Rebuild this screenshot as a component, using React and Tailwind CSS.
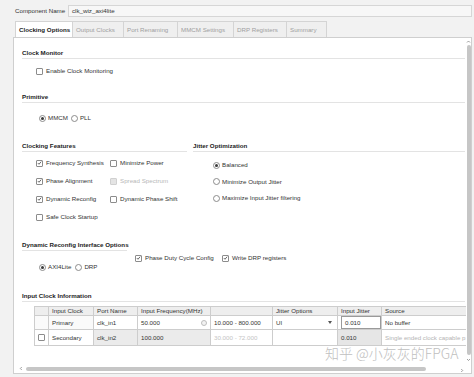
import React from "react";

// small Vivado-like widgets, sized for a 6.2px UI font
function Check({ on, disabled }) {
  return (
    <span
      className={
        "w-[7px] h-[7px] shrink-0 border rounded-[1px] flex items-center justify-center " +
        (disabled ? "border-[#d0d0d0] bg-[#e4e4e4]" : "border-[#8c8c8c] bg-white")
      }
    >
      {on && (
        <svg width="6" height="6" viewBox="0 0 6 6">
          <path d="M1 3.1 L2.4 4.5 L5 1.4" fill="none" stroke="#333" strokeWidth="0.9" />
        </svg>
      )}
    </span>
  );
}

function Radio({ on }) {
  return (
    <span className="w-[7px] h-[7px] shrink-0 rounded-full border border-[#8c8c8c] bg-white flex items-center justify-center">
      {on && <span className="w-[3px] h-[3px] rounded-full bg-[#3a3a3a]" />}
    </span>
  );
}

function CheckItem({ label, on, disabled }) {
  return (
    <div className="h-[10px] flex items-center gap-[3px] whitespace-nowrap">
      <Check on={on} disabled={disabled} />
      <span className={disabled ? "text-[#b8b8b8]" : ""}>{label}</span>
    </div>
  );
}

function RadioItem({ label, on }) {
  return (
    <div className="h-[10px] flex items-center gap-[2px] whitespace-nowrap">
      <Radio on={on} />
      <span>{label}</span>
    </div>
  );
}

function Heading({ children, className = "" }) {
  return (
    <div className={"h-[11px] leading-[10px] border-b border-[#e3e3e3] font-bold text-[#222] whitespace-nowrap " + className}>
      {children}
    </div>
  );
}

const tabs = [
  ["Clocking Options", "w-[58px]"],
  ["Output Clocks", "w-[51px]"],
  ["Port Renaming", "w-[54px]"],
  ["MMCM Settings", "w-[56px]"],
  ["DRP Registers", "w-[53px]"],
  ["Summary", "w-[40px]"],
];

function Cell({ children, className = "" }) {
  return (
    <div className={"border-r border-b border-[#cdcdcd] flex items-center pl-[3px] overflow-hidden whitespace-nowrap " + className}>
      {children}
    </div>
  );
}

export default function App() {
  return (
    <div className="w-[474px] h-[377px] bg-[#f2f2f2] relative overflow-hidden font-['Liberation_Sans',Arial,sans-serif] text-[6.2px] text-[#333]">
      {/* component name */}
      <div className="flex items-center h-[21px] pl-[15px] pr-[2px]">
        <span className="w-[53px] shrink-0">Component Name</span>
        <div className="flex-1 h-[12px] border border-[#d6d6d6] bg-[#f7f7f7] flex items-center pl-[3px]">
          clk_wiz_axi4lite
        </div>
      </div>

      {/* tabs */}
      <div className="flex h-[16px] ml-[15px]">
        {tabs.map(([t, w], i) => (
          <div
            key={t}
            className={
              w +
              " border-t border-r border-[#d4d4d4] flex items-center pl-[3px] whitespace-nowrap " +
              (i === 0 ? "bg-white font-bold text-[#222] border-l" : "bg-[#efefef] text-[#a0a0a0]")
            }
          >
            {t}
          </div>
        ))}
      </div>

      {/* content */}
      <div className="ml-[13px] mr-[2px] h-[337px] border border-[#cfcfcf] bg-white flex flex-col">
        <div className="flex h-[326px]">
          <div className="flex-1 min-w-0 overflow-hidden pl-[8px] pr-[1px]">
            <Heading className="mt-[10px]">Clock Monitor</Heading>
            <div className="mt-[7px] pl-[14px]">
              <CheckItem label="Enable Clock Monitoring" />
            </div>

            <Heading className="mt-[16px]">Primitive</Heading>
            <div className="mt-[10px] pl-[17px] flex gap-[3px]">
              <RadioItem label="MMCM" on />
              <RadioItem label="PLL" />
            </div>

            <div className="mt-[18px] flex">
              <div className="w-[165px]">
                <Heading>Clocking Features</Heading>
                <div className="mt-[6px] pl-[14px] flex flex-col gap-[8px]">
                  <div className="flex">
                    <div className="w-[74px]"><CheckItem label="Frequency Synthesis" on /></div>
                    <CheckItem label="Minimize Power" />
                  </div>
                  <div className="flex">
                    <div className="w-[74px]"><CheckItem label="Phase Alignment" on /></div>
                    <CheckItem label="Spread Spectrum" disabled />
                  </div>
                  <div className="flex">
                    <div className="w-[74px]"><CheckItem label="Dynamic Reconfig" on /></div>
                    <CheckItem label="Dynamic Phase Shift" />
                  </div>
                  <div className="flex">
                    <CheckItem label="Safe Clock Startup" />
                  </div>
                </div>
              </div>
              <div className="flex-1 ml-[6px]">
                <Heading>Jitter Optimization</Heading>
                <div className="mt-[8px] pl-[20px] flex flex-col gap-[6.5px]">
                  <RadioItem label="Balanced" on />
                  <RadioItem label="Minimize Output Jitter" />
                  <RadioItem label="Maximize Input Jitter filtering" />
                </div>
              </div>
            </div>

            <div className="mt-[18px] flex">
              <div className="w-[105px] shrink-0">
                <Heading>Dynamic Reconfig Interface Options</Heading>
                <div className="mt-[11px] pl-[17px] flex gap-[4px]">
                  <RadioItem label="AXI4Lite" on />
                  <RadioItem label="DRP" />
                </div>
              </div>
              <div className="ml-[8px] mt-[13px] flex">
                <div className="w-[87px]"><CheckItem label="Phase Duty Cycle Config" on /></div>
                <CheckItem label="Write DRP registers" on />
              </div>
            </div>

            <Heading className="mt-[19px]">Input Clock Information</Heading>

            <div className="mt-[4px] ml-[12px] grid grid-cols-[14px_45px_44px_73px_62px_65px_44px_110px] grid-rows-[9px_14px_16px] border-l border-t border-[#cdcdcd] w-max">
              {/* header */}
              <Cell className="bg-[#eeeeee]" />
              <Cell className="bg-[#eeeeee]">Input Clock</Cell>
              <Cell className="bg-[#eeeeee]">Port Name</Cell>
              <Cell className="bg-[#eeeeee]">Input Frequency(MHz)</Cell>
              <Cell className="bg-[#eeeeee]" />
              <Cell className="bg-[#eeeeee]">Jitter Options</Cell>
              <Cell className="bg-[#eeeeee]">Input Jitter</Cell>
              <Cell className="bg-[#eeeeee]">Source</Cell>
              {/* row 1 */}
              <Cell className="bg-[#fafafa]" />
              <Cell className="bg-[#fafafa]">Primary</Cell>
              <Cell className="bg-white">clk_in1</Cell>
              <Cell className="bg-white justify-between pr-[3px]">
                <span>50.000</span>
                <span className="w-[6px] h-[6px] rounded-full border border-[#bdbdbd] bg-[#f2f2f2]" />
              </Cell>
              <Cell>10.000 - 800.000</Cell>
              <Cell className="justify-between pr-[5px]">
                <span>UI</span>
                <svg width="4" height="3" viewBox="0 0 4 3">
                  <path d="M0 0 L4 0 L2 3 Z" fill="#555" />
                </svg>
              </Cell>
              <Cell className="bg-white p-0">
                <div className="w-full h-full border border-[#9a9a9a] flex items-center pl-[3px]">0.010</div>
              </Cell>
              <Cell>No buffer</Cell>
              {/* row 2 */}
              <Cell className="pl-[3px]"><Check /></Cell>
              <Cell>Secondary</Cell>
              <Cell className="bg-[#ebebeb]">clk_in2</Cell>
              <Cell className="bg-[#ebebeb]">100.000</Cell>
              <Cell className="text-[#c4c4c4]">30.000 - 72.000</Cell>
              <Cell />
              <Cell className="bg-[#e6e6e6]">0.010</Cell>
              <Cell className="text-[#b4b4b4]">Single ended clock capable p</Cell>
            </div>
          </div>

          {/* vertical scrollbar */}
          <div className="w-[5px] flex flex-col items-center">
            <svg width="5" height="7" viewBox="0 0 5 7" className="shrink-0">
              <path d="M1 4.5 L2.5 3 L4 4.5" fill="none" stroke="#777" strokeWidth="0.7" />
            </svg>
            <div className="flex-1 w-[4px] bg-[#c6c6c6] rounded-[2px]" />
            <svg width="5" height="9" viewBox="0 0 5 9" className="shrink-0">
              <path d="M1 4 L2.5 5.5 L4 4" fill="none" stroke="#777" strokeWidth="0.7" />
            </svg>
          </div>
        </div>

        {/* horizontal scrollbar */}
        <div className="h-[9px] flex items-center pl-[5px] pr-[7px] gap-[3px]">
          <svg width="4" height="5" viewBox="0 0 4 5">
            <path d="M2.8 1 L1.3 2.5 L2.8 4" fill="none" stroke="#777" strokeWidth="0.7" />
          </svg>
          <div className="w-[400px] h-[4px] bg-[#c6c6c6] rounded-[2px]" />
          <div className="flex-1" />
          <svg width="4" height="5" viewBox="0 0 4 5" className="mt-[3px]">
            <path d="M1.2 1 L2.7 2.5 L1.2 4" fill="none" stroke="#777" strokeWidth="0.7" />
          </svg>
        </div>
      </div>

      {/* watermark */}
      <div className="absolute left-[325px] top-[345px] text-[14px] leading-[17px] text-[#c0c0c0] font-['Noto_Sans_CJK_SC',sans-serif] font-light whitespace-nowrap">
        知乎 @小灰灰的FPGA
      </div>
    </div>
  );
}
